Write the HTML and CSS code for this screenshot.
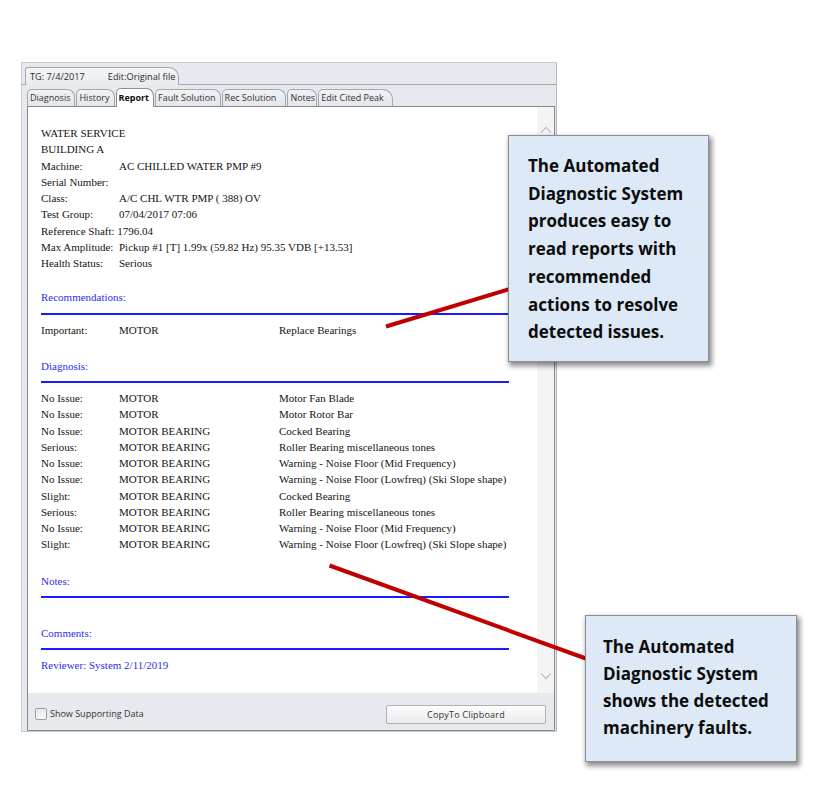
FILE: index.html
```html
<!DOCTYPE html>
<html>
<head>
<meta charset="utf-8">
<link rel="stylesheet" href="styles.css">
</head>
<body>
<div class="page">
  <div class="window">
    <div class="strip">
      <div class="toptab"><span class="tg">TG: 7/4/2017</span><span class="edit">Edit:Original file</span></div>
    </div>
    <div class="tabs">
      <div class="tab">Diagnosis</div>
      <div class="tab">History</div>
      <div class="tab sel">Report</div>
      <div class="tab">Fault Solution</div>
      <div class="tab wide">Rec Solution</div>
      <div class="tab narrow">Notes</div>
      <div class="tab last">Edit Cited Peak</div>
    </div>
    <div class="panel">
      <div class="content">
        <div class="report">
          <div class="line">WATER SERVICE</div>
          <div class="line">BUILDING A</div>
          <div class="line"><span class="lbl">Machine:</span>AC CHILLED WATER PMP #9</div>
          <div class="line"><span class="lbl">Serial Number:</span></div>
          <div class="line"><span class="lbl">Class:</span>A/C CHL WTR PMP ( 388) OV</div>
          <div class="line"><span class="lbl">Test Group:</span>07/04/2017 07:06</div>
          <div class="line">Reference Shaft: 1796.04</div>
          <div class="line"><span class="lbl">Max Amplitude:</span>Pickup #1 [T] 1.99x (59.82 Hz) 95.35 VDB [+13.53]</div>
          <div class="line"><span class="lbl">Health Status:</span>Serious</div>

          <div class="head first">Recommendations:</div>
          <div class="rule"></div>
          <div class="row"><span class="c1">Important:</span><span class="c2">MOTOR</span><span class="c3">Replace Bearings</span></div>

          <div class="head">Diagnosis:</div>
          <div class="rule"></div>
          <div class="row"><span class="c1">No Issue:</span><span class="c2">MOTOR</span><span class="c3">Motor Fan Blade</span></div>
          <div class="row"><span class="c1">No Issue:</span><span class="c2">MOTOR</span><span class="c3">Motor Rotor Bar</span></div>
          <div class="row"><span class="c1">No Issue:</span><span class="c2">MOTOR BEARING</span><span class="c3">Cocked Bearing</span></div>
          <div class="row"><span class="c1">Serious:</span><span class="c2">MOTOR BEARING</span><span class="c3">Roller Bearing miscellaneous tones</span></div>
          <div class="row"><span class="c1">No Issue:</span><span class="c2">MOTOR BEARING</span><span class="c3">Warning - Noise Floor (Mid Frequency)</span></div>
          <div class="row"><span class="c1">No Issue:</span><span class="c2">MOTOR BEARING</span><span class="c3">Warning - Noise Floor (Lowfreq) (Ski Slope shape)</span></div>
          <div class="row"><span class="c1">Slight:</span><span class="c2">MOTOR BEARING</span><span class="c3">Cocked Bearing</span></div>
          <div class="row"><span class="c1">Serious:</span><span class="c2">MOTOR BEARING</span><span class="c3">Roller Bearing miscellaneous tones</span></div>
          <div class="row"><span class="c1">No Issue:</span><span class="c2">MOTOR BEARING</span><span class="c3">Warning - Noise Floor (Mid Frequency)</span></div>
          <div class="row"><span class="c1">Slight:</span><span class="c2">MOTOR BEARING</span><span class="c3">Warning - Noise Floor (Lowfreq) (Ski Slope shape)</span></div>

          <div class="head">Notes:</div>
          <div class="rule"></div>

          <div class="head">Comments:</div>
          <div class="rule"></div>
          <div class="reviewer">Reviewer: System 2/11/2019</div>
        </div>
        <div class="scroll">
          <svg class="chev" width="12" height="8" viewBox="0 0 12 8"><polyline points="1,6.5 6,1.5 11,6.5" fill="none" stroke="#c4c4c4" stroke-width="1.4"/></svg>
          <svg class="chev" width="12" height="8" viewBox="0 0 12 8"><polyline points="1,1.5 6,6.5 11,1.5" fill="none" stroke="#c4c4c4" stroke-width="1.4"/></svg>
        </div>
      </div>
      <div class="bottombar">
        <label class="check"><span class="box"></span>Show Supporting Data</label>
        <div class="button">CopyTo Clipboard</div>
      </div>
    </div>
  </div>

  <svg class="arrows" width="827" height="801" viewBox="0 0 827 801">
    <line x1="386" y1="326.5" x2="510" y2="289" stroke="#c00000" stroke-width="4"/>
    <line x1="329.5" y1="565.5" x2="590" y2="660" stroke="#c00000" stroke-width="4"/>
  </svg>

  <div class="callout c-one">The Automated Diagnostic System produces easy to read reports with recommended actions to resolve detected issues.</div>
  <div class="callout c-two">The Automated Diagnostic System shows the detected machinery faults.</div>
</div>
</body>
</html>
```

FILE: styles.css
```css
html, body {
  margin: 0;
  padding: 0;
  background: #ffffff;
}

.page {
  position: relative;
  width: 827px;
  height: 801px;
  padding: 62px 0 0 21px;
  box-sizing: border-box;
  font-family: "Open Sans", "Noto Sans", sans-serif;
}

.window {
  width: 536px;
  height: 670px;
  box-sizing: border-box;
  border: 1px solid #c8ccd2;
  border-right-color: #b4b8be;
  background: #e6e9ed;
  display: flex;
  flex-direction: column;
}

.strip {
  height: 21px;
  border-bottom: 1px solid #a3a8b0;
  padding-left: 3px;
  display: flex;
  align-items: flex-end;
}

.toptab {
  height: 18px;
  width: 154px;
  flex-shrink: 0;
  margin-bottom: -1px;
  box-sizing: border-box;
  border: 1px solid #a3a8b0;
  border-bottom: none;
  border-radius: 3px 10px 0 0;
  background: linear-gradient(#f4f5f7, #e9ecef);
  display: flex;
  align-items: center;
  padding-left: 4px;
  font-size: 9.2px;
  color: #2b2b2b;
  white-space: nowrap;
}

.toptab .edit {
  margin-left: 23px;
}

.tabs {
  height: 21px;
  display: flex;
  align-items: flex-end;
  padding-left: 5px;
}

.tab {
  height: 17px;
  box-sizing: border-box;
  border: 1px solid #a3a8b0;
  border-bottom: none;
  border-radius: 5px 8px 0 0;
  background: linear-gradient(#f1f2f4, #e3e6ea);
  padding: 0 4px 0 2px;
  margin-right: 1px;
  font-size: 9px;
  line-height: 15px;
  color: #333333;
  white-space: nowrap;
}

.tab.wide {
  padding-right: 9px;
}

.tab.narrow {
  padding-right: 1px;
}

.tab.last {
  padding-right: 8px;
  border-top-right-radius: 10px;
}

.tab.sel {
  height: 19px;
  background: #ffffff;
  font-weight: bold;
  color: #111111;
  margin-bottom: -1px;
  position: relative;
  z-index: 1;
  border-color: #8a8e95;
  line-height: 17px;
}

.panel {
  flex: 1;
  margin: 0 1px 0 5px;
  border: 1px solid #85898f;
  display: flex;
  flex-direction: column;
  min-height: 0;
}

.content {
  flex: 1;
  display: flex;
  background: #ffffff;
  min-height: 0;
}

.report {
  flex: 1;
  display: flex;
  flex-direction: column;
  padding: 18px 0 0 13px;
  font-family: "Liberation Serif", "Times New Roman", serif;
  font-size: 11px;
  line-height: 16.25px;
  color: #141414;
}

.line {
  white-space: nowrap;
}

.lbl {
  display: inline-block;
  min-width: 78px;
}

.head {
  margin-top: 20px;
  color: #2b2bf0;
}

.head.first {
  margin-top: 18px;
}

.rule {
  width: 468px;
  height: 2px;
  flex-shrink: 0;
  background: #1a1aff;
  margin: 7px 0 7px;
}

.row {
  display: flex;
  white-space: nowrap;
}

.c1 {
  width: 78px;
}

.c2 {
  width: 160px;
}

.reviewer {
  color: #2b2bf0;
}

.scroll {
  width: 17px;
  background: #f4f4f4;
  display: flex;
  flex-direction: column;
  justify-content: space-between;
  align-items: center;
  padding: 19px 0 13px;
}

.chev {
  display: block;
}

.bottombar {
  height: 37px;
  background: #e6e9ed;
  display: flex;
  align-items: flex-start;
  justify-content: space-between;
  padding: 0 8px 0 7px;
}

.check {
  display: flex;
  align-items: center;
  font-size: 9px;
  color: #333333;
  margin-top: 14px;
}

.check .box {
  width: 10px;
  height: 10px;
  border: 1px solid #9a9da3;
  border-radius: 2px;
  background: linear-gradient(#e8e9ec, #f7f7f8);
  margin-right: 3px;
}

.button {
  margin-top: 12px;
  width: 160px;
  height: 19px;
  box-sizing: border-box;
  border: 1px solid #adb0b5;
  border-radius: 2px;
  background: linear-gradient(#fdfdfd, #eaebec);
  font-size: 9px;
  line-height: 17px;
  text-align: center;
  color: #333333;
  letter-spacing: 0.2px;
}

.arrows {
  position: absolute;
  left: 0;
  top: 0;
  pointer-events: none;
}

.callout {
  position: absolute;
  box-sizing: border-box;
  background: #dde9f6;
  border: 1px solid #8c8c8c;
  box-shadow: 2px 3px 5px 1px rgba(0, 0, 0, 0.45);
  font-family: "Open Sans", "Noto Sans", sans-serif;
  font-weight: bold;
  font-size: 17px;
  color: #0d0d0d;
}

.c-one {
  left: 508px;
  top: 135px;
  width: 201px;
  height: 227px;
  padding: 16px 8px 0 19px;
  line-height: 27.7px;
}

.c-two {
  left: 585px;
  top: 615px;
  width: 212px;
  height: 147px;
  padding: 17px 8px 0 17px;
  line-height: 27px;
}
```
